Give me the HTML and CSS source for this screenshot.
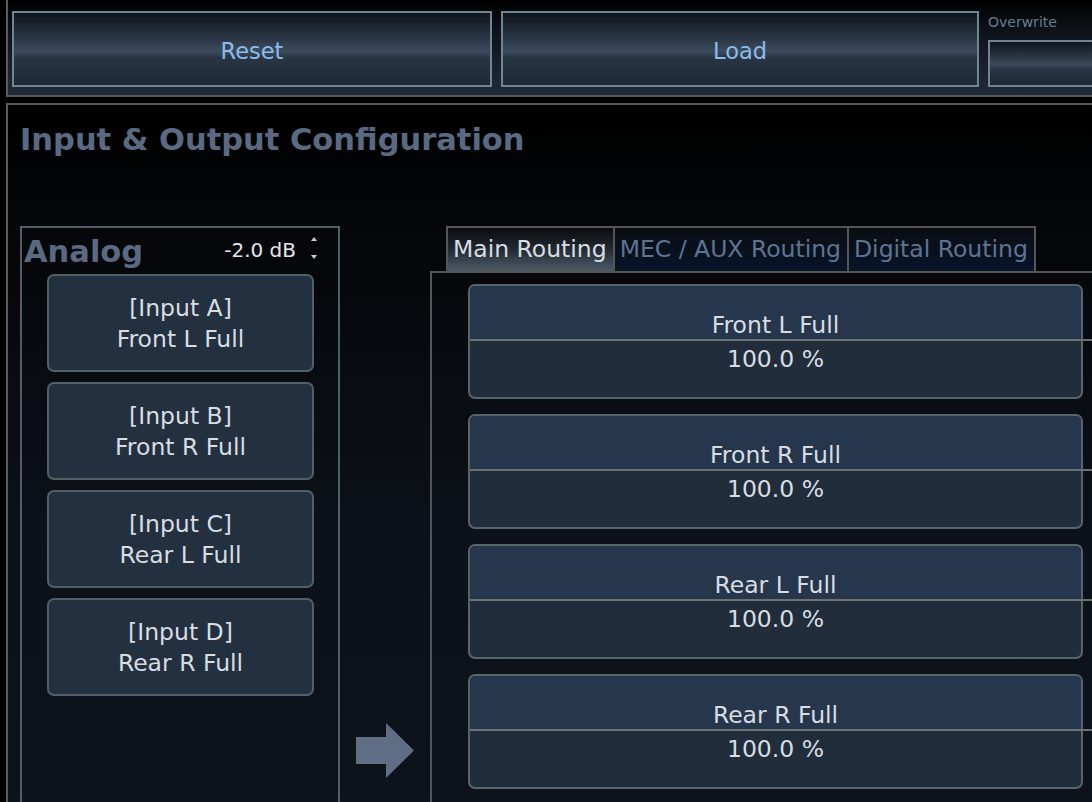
FILE: index.html
```html
<!DOCTYPE html>
<html>
<head>
<meta charset="utf-8">
<title>Input &amp; Output Configuration</title>
<link rel="stylesheet" href="styles.css">
</head>
<body>
<div class="app">
  <div class="topbar">
    <button class="top-btn reset">Reset</button>
    <button class="top-btn load">Load</button>
    <div class="overwrite">
      <div class="ow-label">Overwrite</div>
      <div class="ow-box"></div>
    </div>
  </div>

  <div class="main">
    <h1 class="title">Input &amp; Output Configuration</h1>
    <div class="content">
      <div class="analog">
        <div class="analog-head">
          <span class="analog-title">Analog</span>
          <span class="gain">-2.0 dB</span>
          <svg class="spin" width="8" height="24" viewBox="0 0 8 24">
            <polygon points="1,5 7,5 4,1" fill="#c8ccd0"/>
            <polygon points="1,19 7,19 4,23" fill="#c8ccd0"/>
          </svg>
        </div>
        <div class="inputs">
          <div class="in-btn">[Input A]<br>Front L Full</div>
          <div class="in-btn">[Input B]<br>Front R Full</div>
          <div class="in-btn">[Input C]<br>Rear L Full</div>
          <div class="in-btn">[Input D]<br>Rear R Full</div>
        </div>
      </div>

      <div class="arrow-col">
        <svg class="arrow" width="60" height="56" viewBox="0 0 60 56">
          <polygon points="0,14 30,14 30,0 58,27.5 30,55 30,41 0,41" fill="#5f6e84"/>
        </svg>
      </div>

      <div class="routing">
        <div class="tabs">
          <div class="tab active">Main Routing</div>
          <div class="tab">MEC / AUX Routing</div>
          <div class="tab">Digital Routing</div>
        </div>
        <div class="route-panel">
          <div class="card">
            <div class="card-top">Front L Full</div>
            <div class="card-line"></div>
            <div class="card-bot">100.0 %</div>
          </div>
          <div class="card">
            <div class="card-top">Front R Full</div>
            <div class="card-line"></div>
            <div class="card-bot">100.0 %</div>
          </div>
          <div class="card">
            <div class="card-top">Rear L Full</div>
            <div class="card-line"></div>
            <div class="card-bot">100.0 %</div>
          </div>
          <div class="card">
            <div class="card-top">Rear R Full</div>
            <div class="card-line"></div>
            <div class="card-bot">100.0 %</div>
          </div>
        </div>
      </div>
    </div>
  </div>
</div>
</body>
</html>
```

FILE: styles.css
```css
html, body {
  margin: 0;
  padding: 0;
  background: #000;
  width: 1092px;
  height: 802px;
  overflow: hidden;
  font-family: "DejaVu Sans", Verdana, sans-serif;
}

.app {
  margin-left: 6px;
  width: 1086px;
}

/* ---------- top bar ---------- */
.topbar {
  border-left: 2px solid #5a5a5a;
  border-bottom: 2px solid #5a5a5a;
  background: linear-gradient(#000 0%, #0d1218 30%, #1f2a3b 100%);
  display: flex;
  align-items: flex-start;
  padding: 11px 0 0 4px;
  box-sizing: border-box;
  height: 97px;
  gap: 9px;
  overflow: hidden;
}

.top-btn {
  height: 76px;
  border: 2px solid #6e8594;
  background: linear-gradient(#10151c 0%, #2a3645 35%, #3b4b5d 53%, #2a3544 62%, #1e2938 100%);
  color: #8cbcec;
  font-family: "DejaVu Sans", Verdana, sans-serif;
  font-size: 22.5px;
  padding: 4px 0 0 0;
  margin: 0;
  flex: none;
}

.reset { width: 480px; }
.load { width: 478px; }

.overwrite {
  display: flex;
  flex-direction: column;
  flex: none;
  width: 140px;
}

.ow-label {
  font-size: 14px;
  line-height: 22px;
  color: #687c90;
  height: 22px;
}

.ow-box {
  margin-top: 7px;
  height: 43px;
  border: 2px solid #6e8594;
  background: linear-gradient(#10151c 0%, #2a3645 35%, #3b4b5d 53%, #2a3544 62%, #1e2938 100%);
}

/* ---------- main panel ---------- */
.main {
  margin-top: 6px;
  border-left: 2px solid #5a5a5a;
  border-top: 2px solid #5a5a5a;
  height: 720px;
  background: linear-gradient(#000 0%, #05070a 20%, #0d1119 60%, #0e121a 100%);
  padding: 17px 0 0 12px;
  box-sizing: border-box;
}

.title {
  margin: 0;
  font-size: 30.5px;
  line-height: 36px;
  font-weight: bold;
  color: #5a6a82;
}

.content {
  display: flex;
  margin-top: 68px;
  align-items: flex-start;
}

/* ---------- analog ---------- */
.analog {
  width: 320px;
  height: 620px;
  box-sizing: border-box;
  border: 2px solid #4d6068;
  flex: none;
}

.analog-head {
  display: flex;
  align-items: center;
  height: 43px;
  padding: 5px 0 0 2px;
  box-sizing: border-box;
}

.analog-title {
  font-size: 30.5px;
  line-height: 36px;
  font-weight: bold;
  color: #5a6a82;
  flex: 1;
}

.gain {
  font-size: 20px;
  color: #e2e6ea;
  margin-top: -5px;
}

.spin {
  margin: -9px 20px 0 14px;
}

.inputs {
  display: flex;
  flex-direction: column;
  gap: 10px;
  padding: 3px 0 0 25px;
}

.in-btn {
  width: 267px;
  height: 98px;
  box-sizing: border-box;
  border: 2px solid #4f6068;
  border-radius: 7px;
  background: #233040;
  color: #d8dde2;
  font-size: 23.5px;
  line-height: 31px;
  display: flex;
  align-items: center;
  justify-content: center;
  text-align: center;
  padding-top: 2px;
}

/* ---------- arrow ---------- */
.arrow-col {
  width: 90px;
  flex: none;
  padding: 497px 0 0 16px;
  box-sizing: border-box;
}

.arrow { display: block; }

/* ---------- routing ---------- */
.routing {
  flex: 1;
  min-width: 0;
}

.tabs {
  display: flex;
  margin-left: 16px;
  height: 45px;
}

.tab {
  height: 45px;
  box-sizing: border-box;
  border-top: 2px solid #555;
  border-left: 2px solid #555;
  padding: 0 6px 0 5px;
  font-size: 23.5px;
  line-height: 43px;
  color: #5e7591;
  background: linear-gradient(#0a0d12, #08142a);
  white-space: nowrap;
}

.tab:last-child {
  border-right: 2px solid #555;
}

.tab.active {
  color: #d8dde2;
  background: linear-gradient(#0a0b0d 0%, #222a33 50%, #4e5a66 100%);
}

.route-panel {
  border-left: 2px solid #555;
  border-top: 2px solid #555;
  height: 600px;
  padding: 11px 0 0 36px;
  box-sizing: border-box;
  display: flex;
  flex-direction: column;
  gap: 15px;
}

.card {
  width: 615px;
  height: 115px;
  box-sizing: border-box;
  border: 2px solid #56656c;
  border-radius: 7px;
  background: #222d3c;
  display: flex;
  flex-direction: column;
  color: #d8dde2;
  font-size: 23.5px;
  text-align: center;
}

.card-top {
  height: 53px;
  line-height: 28px;
  background: #26364c;
  border-radius: 5px 5px 0 0;
  display: flex;
  align-items: flex-end;
  justify-content: center;
}

.card-line {
  height: 2px;
  background: #6a7272;
  margin-right: -12px;
}

.card-bot {
  line-height: 28px;
  padding-top: 4px;
}
```
